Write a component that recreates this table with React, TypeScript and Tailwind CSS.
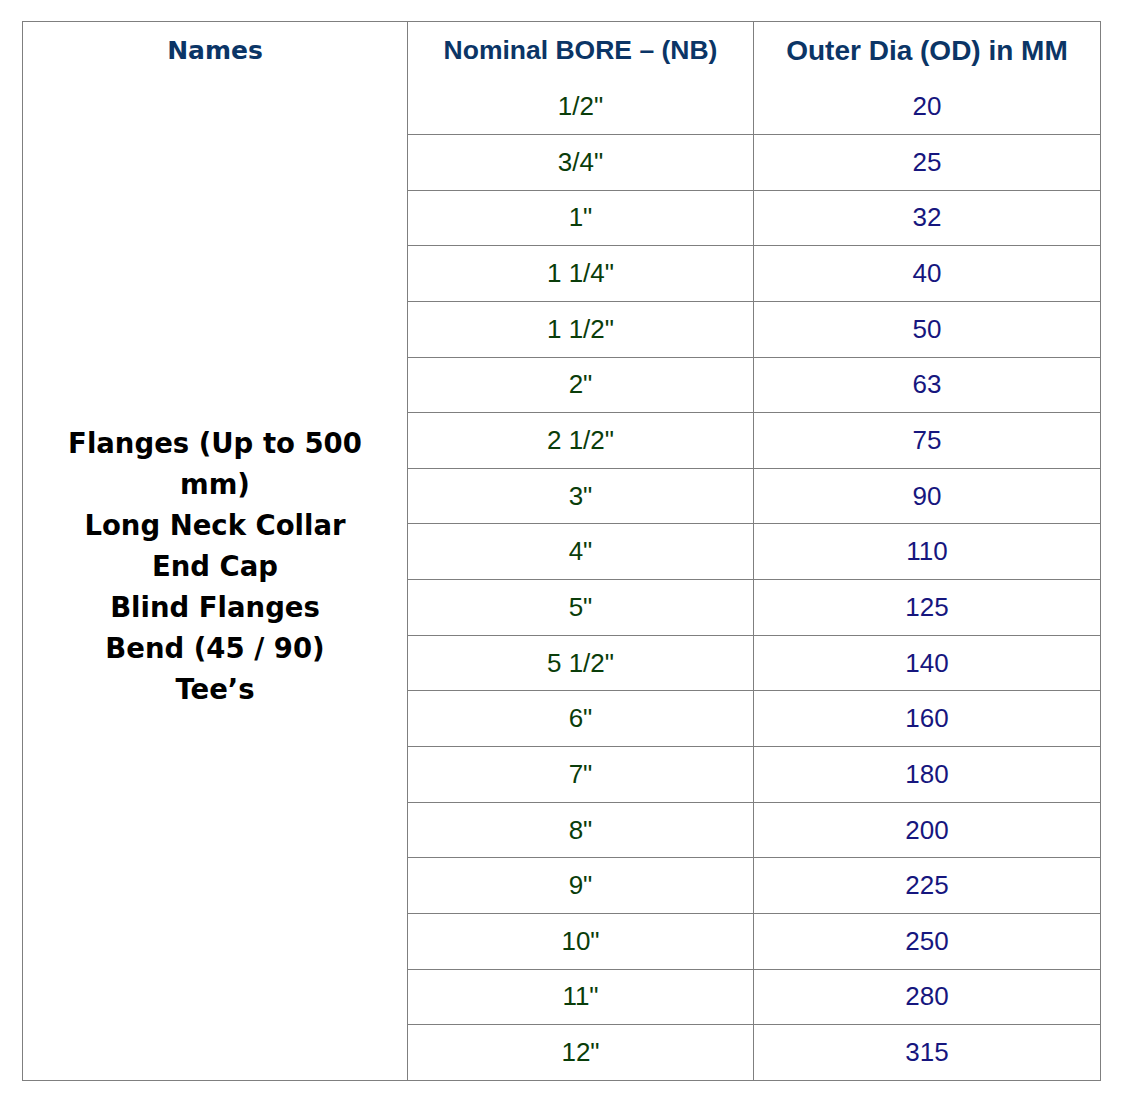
import React from "react";

const rows: [string, string][] = [
  ["1/2\"", "20"],
  ["3/4\"", "25"],
  ["1\"", "32"],
  ["1 1/4\"", "40"],
  ["1 1/2\"", "50"],
  ["2\"", "63"],
  ["2 1/2\"", "75"],
  ["3\"", "90"],
  ["4\"", "110"],
  ["5\"", "125"],
  ["5 1/2\"", "140"],
  ["6\"", "160"],
  ["7\"", "180"],
  ["8\"", "200"],
  ["9\"", "225"],
  ["10\"", "250"],
  ["11\"", "280"],
  ["12\"", "315"],
];

const names = [
  "Flanges (Up to 500 mm)",
  "Long Neck Collar",
  "End Cap",
  "Blind Flanges",
  "Bend (45 / 90)",
  "Tee’s",
];

function DataColumn({
  title,
  titleSize,
  values,
  color,
  last,
}: {
  title: string;
  titleSize: string;
  values: string[];
  color: string;
  last?: boolean;
}) {
  return (
    <div className={`flex flex-col ${last ? "w-[346px]" : "w-[346px] border-r border-[#7f7f7f]"}`}>
      <div className={`h-[56px] pt-[1px] flex items-center justify-center font-bold text-[#0b3566] font-['Liberation_Sans',Arial,sans-serif] ${titleSize}`}>
        {title}
      </div>
      {values.map((v, i) => (
        <div
          key={i}
          className={`${i === 0 ? "h-[56px] pt-[1px]" : "flex-1 border-t border-[#7f7f7f]"} flex items-center justify-center text-[26px] font-['Liberation_Sans',Arial,sans-serif] ${color}`}
        >
          {v}
        </div>
      ))}
    </div>
  );
}

export default function App() {
  return (
    <div className="w-[1136px] h-[1108px] bg-white pt-[21px] pl-[22px]">
      <div className="w-[1079px] h-[1060px] border border-[#7f7f7f] flex">
        <div className="w-[385px] border-r border-[#7f7f7f] flex flex-col">
          <div className="h-[56px] pt-[2px] flex items-center justify-center text-[25px] font-bold text-[#0b3566] font-['DejaVu_Sans',sans-serif]">
            Names
          </div>
          <div className="flex-1 flex flex-col items-center justify-center pb-[26px] text-[27.5px] leading-[41px] font-bold text-black font-['DejaVu_Sans',sans-serif] text-center">
            {names.map((n, i) => (
              <div key={i} className="max-w-[320px]">
                {n}
              </div>
            ))}
          </div>
        </div>
        <DataColumn
          title="Nominal BORE – (NB)"
          titleSize="text-[26.5px]"
          values={rows.map((r) => r[0])}
          color="text-[#0a3d0a]"
        />
        <DataColumn
          title="Outer Dia (OD) in MM"
          titleSize="text-[28px]"
          values={rows.map((r) => r[1])}
          color="text-[#16167e]"
          last
        />
      </div>
    </div>
  );
}
